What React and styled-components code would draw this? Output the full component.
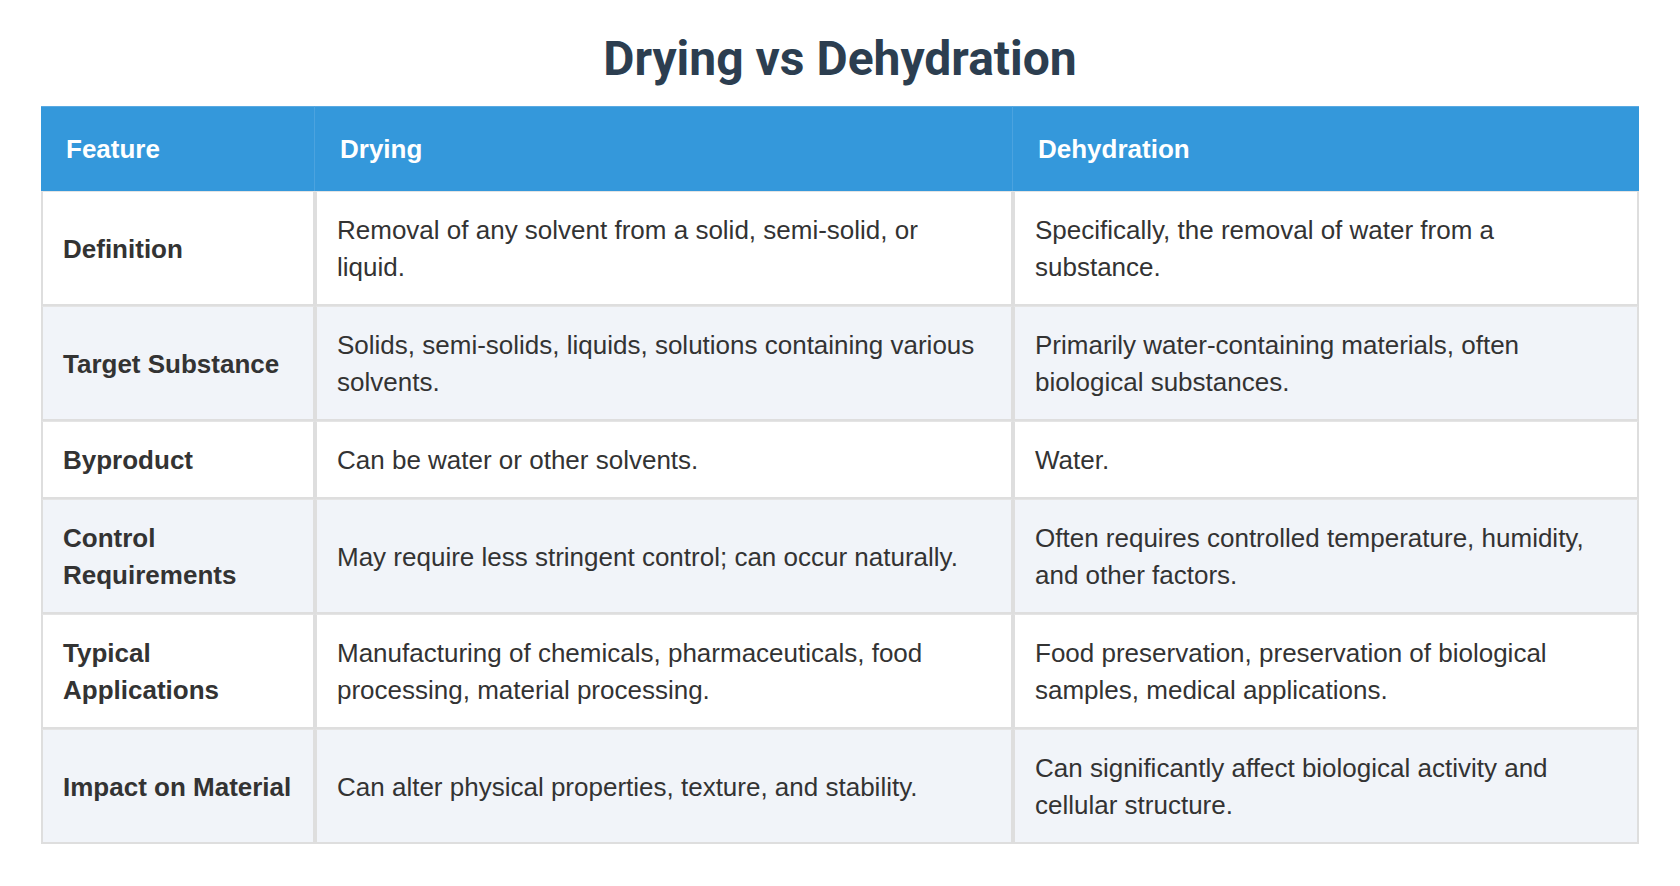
import * as React from 'react';
import styled, { createGlobalStyle } from 'styled-components';

const GlobalStyle = createGlobalStyle`
    html, body {
        margin: 0;
        padding: 0;
        background: #FFFFFF;
    }
`;

const Page = styled.div`
    padding: 32px 41px 40px 41px;
    font-family: "Liberation Sans", Arial, sans-serif;
    color: #333333;
`;

const Title = styled.h1`
    margin: 0 0 20px 0;
    font-family: Roboto, "Liberation Sans", sans-serif;
    font-weight: 700;
    font-size: 48px;
    line-height: 54px;
    color: #2c3e50;
    text-align: center;
`;

const Table = styled.table`
    width: 100%;
    table-layout: fixed;
    border-collapse: separate;
    border-spacing: 0;
    font-size: 26px;
    line-height: 37px;
`;

const HeadCell = styled.th`
    background: #3498db;
    color: #FFFFFF;
    font-weight: 700;
    text-align: left;
    padding: 24px 24px 23px 25px;
    border-top: 1px solid #5aaae2;
    border-right: 1px solid #4ba3df;

    &:last-child {
        border-right: none;
    }
`;

const Row = styled.tr`
    background: ${props => props.$striped ? '#f1f4f9' : '#FFFFFF'};
`;

const Cell = styled.td`
    padding: 20px 20px 18px 20px;
    vertical-align: middle;
    border-left: 2px solid #dedede;
    border-right: 2px solid #dedede;
    border-top: 1px solid #e4e4e4;
    border-bottom: 2px solid #dedede;
    color: #333333;
`;

const LabelCell = styled(Cell)`
    font-weight: 700;
    padding-right: 14px;
`;

const rows = [
    ['Definition', 'Removal of any solvent from a solid, semi-solid, or liquid.', 'Specifically, the removal of water from a substance.'],
    ['Target Substance', 'Solids, semi-solids, liquids, solutions containing various solvents.', 'Primarily water-containing materials, often biological substances.'],
    ['Byproduct', 'Can be water or other solvents.', 'Water.'],
    ['Control Requirements', 'May require less stringent control; can occur naturally.', 'Often requires controlled temperature, humidity, and other factors.'],
    ['Typical Applications', 'Manufacturing of chemicals, pharmaceuticals, food processing, material processing.', 'Food preservation, preservation of biological samples, medical applications.'],
    ['Impact on Material', 'Can alter physical properties, texture, and stability.', 'Can significantly affect biological activity and cellular structure.'],
];

export default function App() {
    return <Page>
        <GlobalStyle/>
        <Title>Drying vs Dehydration</Title>
        <Table>
            <colgroup>
                <col style={{width: 274}}/>
                <col style={{width: 698}}/>
                <col/>
            </colgroup>
            <thead>
                <tr>
                    <HeadCell>Feature</HeadCell>
                    <HeadCell>Drying</HeadCell>
                    <HeadCell>Dehydration</HeadCell>
                </tr>
            </thead>
            <tbody>
                {rows.map((r, i) => <Row key={r[0]} $striped={i % 2 === 1}>
                    <LabelCell>{r[0]}</LabelCell>
                    <Cell>{r[1]}</Cell>
                    <Cell>{r[2]}</Cell>
                </Row>)}
            </tbody>
        </Table>
    </Page>;
}
